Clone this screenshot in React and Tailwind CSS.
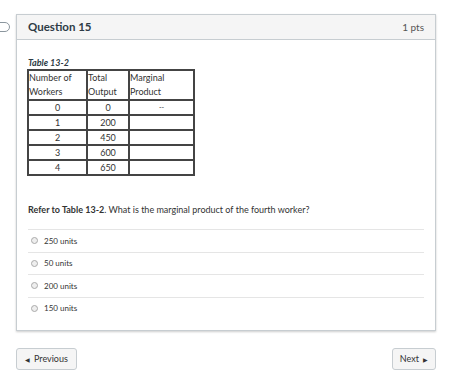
import React from 'react'

const rows = [
    ['0', '0', '--'],
    ['1', '200', ''],
    ['2', '450', ''],
    ['3', '600', ''],
    ['4', '650', ''],
]

const answers = ['250 units', '50 units', '200 units', '150 units']

const App = () => {
    return (
        <div className="w-[474px] h-[377px] bg-white relative text-[#2d3b45]" style={{ fontFamily: 'Lato, "Liberation Sans", sans-serif' }}>
            {/* bookmark toggle, cut off at the left edge */}
            <div className="absolute left-[-8px] top-[22px] w-[18px] h-[10px] rounded-full border border-[#8b969e]"></div>

            <div className="pt-[14px] pl-[16px] w-[436px]">
                <div className="border border-[#c7cdd1] shadow-[0_1px_2px_rgba(0,0,0,0.2)]">
                    <div className="h-[25px] bg-[#f5f5f5] border-b border-[#c7cdd1] flex items-center justify-between pl-[11px] pr-[11px]">
                        <span className="text-[11.5px] font-bold">Question 15</span>
                        <span className="text-[10px] text-[#555]">1 pts</span>
                    </div>

                    <div className="px-[11px] pt-[17px] pb-[11px]">
                        <div className="text-[9px] font-bold italic leading-[11px]">Table 13-2</div>
                        <table className="border-collapse text-[9px] leading-[14px] text-[#333] mt-[1px] ml-[-1px]">
                            <thead>
                                <tr>
                                    <th className="border-2 border-[#444] w-[59px] text-left font-normal align-top">Number of<br />Workers</th>
                                    <th className="border-2 border-[#444] w-[42px] text-left font-normal align-top">Total<br />Output</th>
                                    <th className="border-2 border-[#444] w-[65px] text-left font-normal align-top">Marginal<br />Product</th>
                                </tr>
                            </thead>
                            <tbody>
                                {rows.map((r, i) => (
                                    <tr key={i} className="h-[15px]">
                                        <td className="border-2 border-[#444] text-center p-0 leading-[11px]">{r[0]}</td>
                                        <td className="border-2 border-[#444] text-center p-0 leading-[11px]">{r[1]}</td>
                                        <td className="border-2 border-[#444] text-center p-0 leading-[11px] text-[7px]">{r[2]}</td>
                                    </tr>
                                ))}
                            </tbody>
                        </table>

                        <p className="mt-[28px] text-[9px] leading-[12px] text-[#333]">
                            <b>Refer to Table 13-2</b>. What is the marginal product of the fourth worker?
                        </p>

                        <div className="mt-[13px]">
                            {answers.map((a) => (
                                <div key={a} className="border-t border-[#e5e5e5] h-[22.5px] flex items-center pl-[3px] gap-[6px]">
                                    <span className="w-[7px] h-[7px] rounded-full border border-[#aaa] bg-[#eee]"></span>
                                    <span className="text-[8px] text-[#333]">{a}</span>
                                </div>
                            ))}
                        </div>
                    </div>
                </div>
            </div>

            <div className="flex justify-between pl-[16px] w-[436px] mt-[17px]">
                <button className="h-[22px] px-[8px] bg-[#f5f5f5] border border-[#c7cdd1] rounded-[3px] text-[9px] text-[#333] flex items-center gap-[4px]">
                    <span className="text-[6px]">◀</span>Previous
                </button>
                <button className="h-[22px] px-[7px] bg-[#f5f5f5] border border-[#c7cdd1] rounded-[3px] text-[9px] text-[#333] flex items-center gap-[4px]">
                    Next<span className="text-[6px]">▶</span>
                </button>
            </div>
        </div>
    )
}

export default App
